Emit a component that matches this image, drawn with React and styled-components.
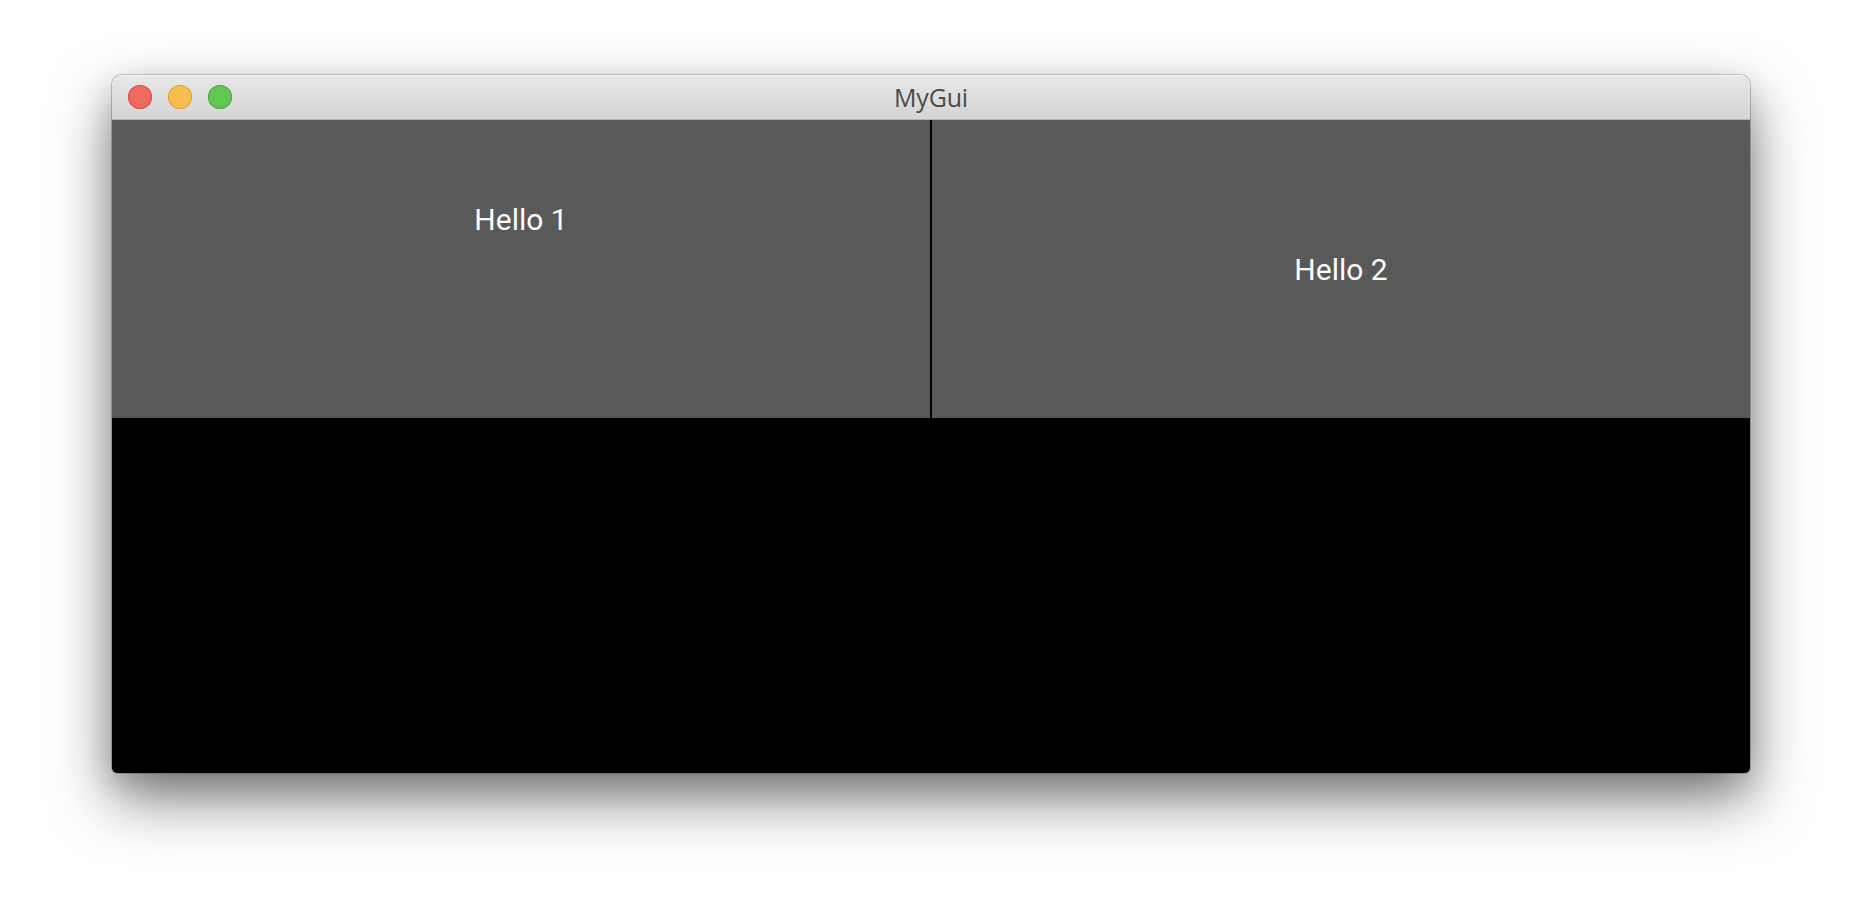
import React from "react";
import styled, { createGlobalStyle } from "styled-components";

const GlobalStyle = createGlobalStyle`
  html, body {
    margin: 0;
    padding: 0;
    background: #ffffff;
  }
  body {
    font-family: "Roboto", "Liberation Sans", sans-serif;
  }
`;

const lights = [
  { fill: "#ee6a5f", edge: "#d2554a" },
  { fill: "#f6be4f", edge: "#d9a03c" },
  { fill: "#62c655", edge: "#4ea83f" },
];

const App = () => {
  return (
    <Desktop>
      <GlobalStyle />
      <Window>
        <TitleBar>
          <Lights>
            {lights.map((l, index) => (
              <Light key={index} $fill={l.fill} $edge={l.edge} />
            ))}
          </Lights>
          <Title>MyGui</Title>
        </TitleBar>
        <TopRow>
          <Panel $lift={50}>
            <Label>Hello 1</Label>
          </Panel>
          <Divider />
          <Panel>
            <Label>Hello 2</Label>
          </Panel>
        </TopRow>
        <BottomArea />
      </Window>
    </Desktop>
  );
};

export default App;

const Desktop = styled.div`
  width: 1862px;
  height: 922px;
  padding: 75px 0 0 112px;
  box-sizing: border-box;
  overflow: hidden;
`;

const Window = styled.div`
  width: 1638px;
  display: flex;
  flex-direction: column;
  border-radius: 10px 10px 5px 5px;
  overflow: hidden;
  box-shadow: 0 0 0 1px rgba(0, 0, 0, 0.2), 0 26px 60px rgba(0, 0, 0, 0.5),
    0 12px 30px rgba(0, 0, 0, 0.14);
`;

const TitleBar = styled.div`
  height: 44px;
  display: grid;
  grid-template-columns: 1fr auto 1fr;
  align-items: center;
  background: linear-gradient(#e9e8e9, #d4d4d4);
  border-bottom: 1px solid #b3b3b3;
  box-shadow: inset 0 1px 0 rgba(255, 255, 255, 0.6);
`;

const Lights = styled.div`
  display: flex;
  gap: 16px;
  padding-left: 16px;
`;

const Light = styled.span`
  width: 24px;
  height: 24px;
  border-radius: 50%;
  background: ${(p) => p.$fill};
  box-shadow: inset 0 0 0 1px ${(p) => p.$edge};
`;

const Title = styled.div`
  font-family: "Open Sans", "Liberation Sans", sans-serif;
  font-size: 25px;
  color: #4a4a4a;
  letter-spacing: -0.2px;
`;

const TopRow = styled.div`
  height: 298px;
  display: grid;
  grid-template-columns: 818px 2px 1fr;
`;

const Panel = styled.div`
  background: #595959;
  display: flex;
  align-items: center;
  justify-content: center;
  padding-bottom: ${(p) => (p.$lift ? p.$lift * 2 : 0)}px;
  box-sizing: border-box;
`;

const Divider = styled.div`
  background: #000000;
`;

const Label = styled.span`
  font-family: "Roboto", "Liberation Sans", sans-serif;
  font-size: 30px;
  color: #ffffff;
`;

const BottomArea = styled.div`
  height: 355px;
  background: #000000;
`;
